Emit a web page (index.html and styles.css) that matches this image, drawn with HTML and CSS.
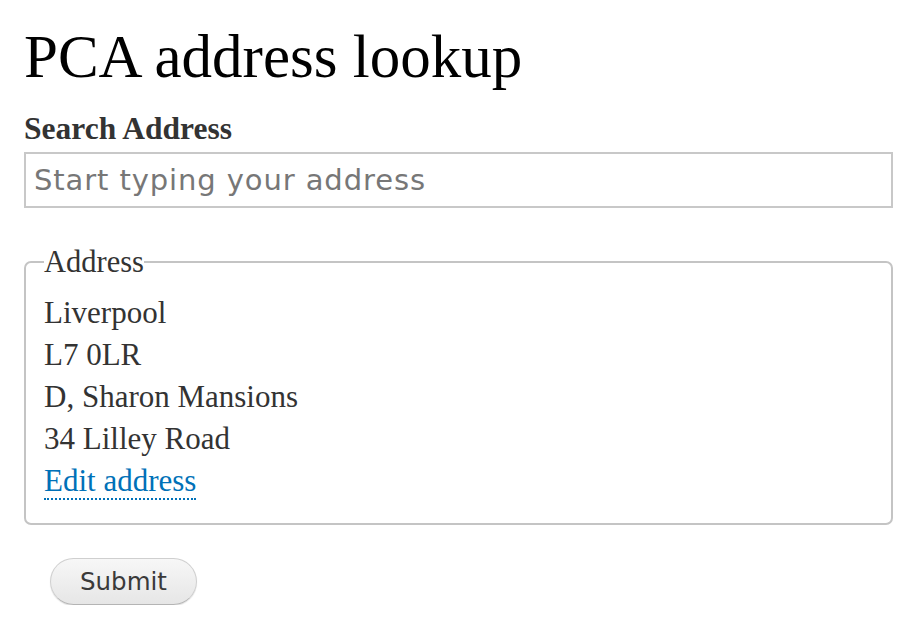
FILE: index.html
```html
<!DOCTYPE html>
<html>
<head>
<meta charset="utf-8">
<link rel="stylesheet" href="styles.css">
</head>
<body>
<main class="page">
  <h1 class="title">PCA address lookup</h1>
  <form class="form">
    <label class="label" for="search">Search Address</label>
    <input class="search" id="search" type="text" placeholder="Start typing your address">
    <fieldset class="address">
      <legend class="legend">Address</legend>
      <div class="line">Liverpool</div>
      <div class="line">L7 0LR</div>
      <div class="line">D, Sharon Mansions</div>
      <div class="line">34 Lilley Road</div>
      <div class="line"><a class="edit" href="#">Edit address</a></div>
    </fieldset>
    <div class="actions">
      <button class="submit" type="button">Submit</button>
    </div>
  </form>
</main>
</body>
</html>
```

FILE: styles.css
```css
html, body {
  margin: 0;
  padding: 0;
  background: #fff;
}
.page {
  padding: 21px 25px 0 24px;
  font-family: "Liberation Serif", serif;
  color: #333;
}
.title {
  margin: 0;
  font-size: 61px;
  font-weight: normal;
  line-height: 72px;
  color: #000;
}
.form {
  display: flex;
  flex-direction: column;
  margin-top: 18px;
}
.label {
  font-size: 31.5px;
  font-weight: bold;
  line-height: 36px;
  color: #333;
}
.search {
  box-sizing: border-box;
  margin: 5px 0 0;
  height: 56px;
  width: 100%;
  border: 2px solid #c8c8c8;
  border-radius: 0;
  padding: 0 8px;
  font-family: "DejaVu Sans", sans-serif;
  font-size: 29px;
  letter-spacing: 0.9px;
  color: #333;
  outline: none;
}
.search::placeholder {
  color: #777;
}
.address {
  margin: 37px 0 0;
  border: 2px solid #c4c4c4;
  border-radius: 7px;
  padding: 13px 18px 21px;
}
.legend {
  padding: 0;
  font-size: 30.5px;
  line-height: 34px;
  color: #333;
}
.line {
  font-size: 31px;
  line-height: 42px;
  color: #333;
}
.edit {
  color: #0071b8;
  text-decoration: none;
  border-bottom: 2px dotted #0071b8;
}
.actions {
  margin: 33px 0 0 26px;
}
.submit {
  box-sizing: border-box;
  width: 147px;
  height: 47px;
  border: 1px solid #cfcfcf;
  border-bottom-color: #b4b4b4;
  border-radius: 24px;
  background: linear-gradient(#f7f7f7, #e6e6e6);
  box-shadow: 0 1px 1px rgba(0,0,0,0.12);
  font-family: "DejaVu Sans", sans-serif;
  font-size: 24.5px;
  color: #3a3a3a;
  padding: 0;
}
```
